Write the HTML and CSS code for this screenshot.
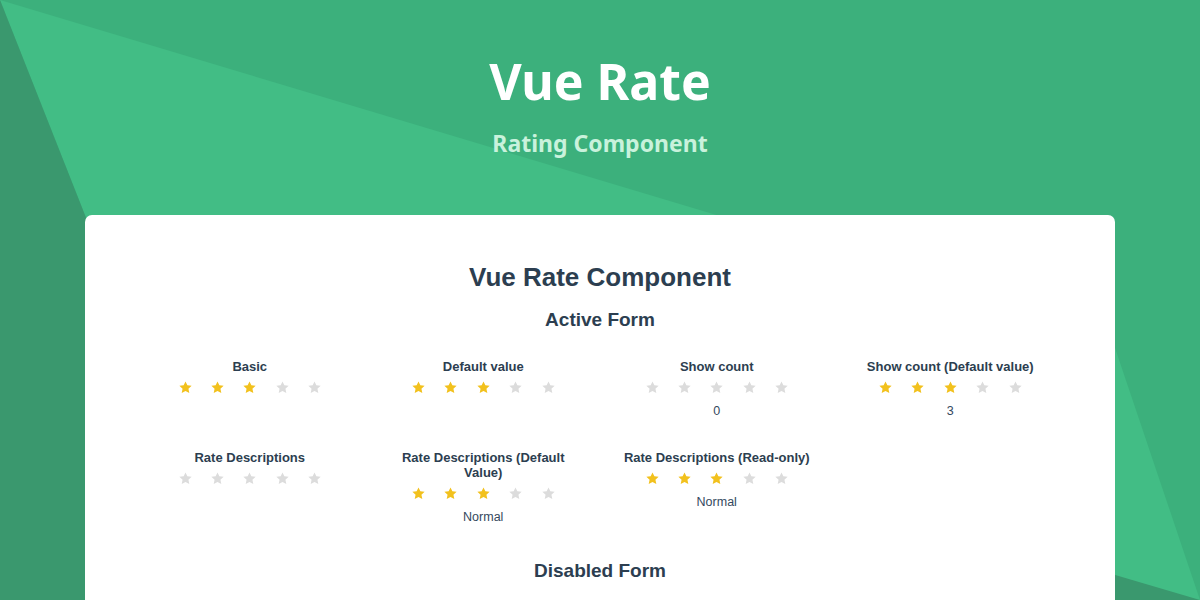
FILE: index.html
```html
<!DOCTYPE html>
<html lang="en">
<head>
<meta charset="utf-8">
<title>Vue Rate</title>
<link rel="stylesheet" href="styles.css">
</head>
<body>
<svg class="bg" viewBox="0 0 1200 600" preserveAspectRatio="none" aria-hidden="true">
  <polygon class="bg-light" points="0,0 1110,333 1200,600 237,600"/>
  <polygon class="bg-dark" points="0,0 237,600 0,600"/>
  <polygon class="bg-dark" points="1000,541 1200,600 1000,600"/>
</svg>
<div class="page">
  <header class="hero">
    <h1 class="hero-title">Vue Rate</h1>
    <p class="hero-sub">Rating Component</p>
  </header>
  <main class="card">
    <h2 class="card-title">Vue Rate Component</h2>
    <h3 class="section-title">Active Form</h3>
    <div class="grid">
      <div class="item">
        <div class="label">Basic</div>
        <div class="stars"><svg class="star on" viewBox="0 0 24 24"><use href="#s"/></svg><svg class="star on" viewBox="0 0 24 24"><use href="#s"/></svg><svg class="star on" viewBox="0 0 24 24"><use href="#s"/></svg><svg class="star" viewBox="0 0 24 24"><use href="#s"/></svg><svg class="star" viewBox="0 0 24 24"><use href="#s"/></svg></div>
      </div>
      <div class="item">
        <div class="label">Default value</div>
        <div class="stars"><svg class="star on" viewBox="0 0 24 24"><use href="#s"/></svg><svg class="star on" viewBox="0 0 24 24"><use href="#s"/></svg><svg class="star on" viewBox="0 0 24 24"><use href="#s"/></svg><svg class="star" viewBox="0 0 24 24"><use href="#s"/></svg><svg class="star" viewBox="0 0 24 24"><use href="#s"/></svg></div>
      </div>
      <div class="item">
        <div class="label">Show count</div>
        <div class="stars"><svg class="star" viewBox="0 0 24 24"><use href="#s"/></svg><svg class="star" viewBox="0 0 24 24"><use href="#s"/></svg><svg class="star" viewBox="0 0 24 24"><use href="#s"/></svg><svg class="star" viewBox="0 0 24 24"><use href="#s"/></svg><svg class="star" viewBox="0 0 24 24"><use href="#s"/></svg></div>
        <div class="info">0</div>
      </div>
      <div class="item">
        <div class="label">Show count (Default value)</div>
        <div class="stars"><svg class="star on" viewBox="0 0 24 24"><use href="#s"/></svg><svg class="star on" viewBox="0 0 24 24"><use href="#s"/></svg><svg class="star on" viewBox="0 0 24 24"><use href="#s"/></svg><svg class="star" viewBox="0 0 24 24"><use href="#s"/></svg><svg class="star" viewBox="0 0 24 24"><use href="#s"/></svg></div>
        <div class="info">3</div>
      </div>
      <div class="item">
        <div class="label">Rate Descriptions</div>
        <div class="stars"><svg class="star" viewBox="0 0 24 24"><use href="#s"/></svg><svg class="star" viewBox="0 0 24 24"><use href="#s"/></svg><svg class="star" viewBox="0 0 24 24"><use href="#s"/></svg><svg class="star" viewBox="0 0 24 24"><use href="#s"/></svg><svg class="star" viewBox="0 0 24 24"><use href="#s"/></svg></div>
      </div>
      <div class="item">
        <div class="label">Rate Descriptions (Default Value)</div>
        <div class="stars"><svg class="star on" viewBox="0 0 24 24"><use href="#s"/></svg><svg class="star on" viewBox="0 0 24 24"><use href="#s"/></svg><svg class="star on" viewBox="0 0 24 24"><use href="#s"/></svg><svg class="star" viewBox="0 0 24 24"><use href="#s"/></svg><svg class="star" viewBox="0 0 24 24"><use href="#s"/></svg></div>
        <div class="info">Normal</div>
      </div>
      <div class="item">
        <div class="label">Rate Descriptions (Read-only)</div>
        <div class="stars"><svg class="star on" viewBox="0 0 24 24"><use href="#s"/></svg><svg class="star on" viewBox="0 0 24 24"><use href="#s"/></svg><svg class="star on" viewBox="0 0 24 24"><use href="#s"/></svg><svg class="star" viewBox="0 0 24 24"><use href="#s"/></svg><svg class="star" viewBox="0 0 24 24"><use href="#s"/></svg></div>
        <div class="info">Normal</div>
      </div>
    </div>
    <h3 class="section-title disabled-title">Disabled Form</h3>
  </main>
</div>
<svg class="defs" aria-hidden="true"><defs><path id="s" d="M12 2.2l2.95 6.3 6.85.8-5.1 4.7 1.4 6.8L12 17.4l-6.1 3.4 1.4-6.8-5.1-4.7 6.85-.8z"/></defs></svg>
</body>
</html>
```
FILE: styles.css
```css
html, body {
  margin: 0;
  padding: 0;
}
body {
  position: relative;
  width: 1200px;
  height: 600px;
  overflow: hidden;
  background: #3cb07c;
  font-family: "Liberation Sans", Arial, sans-serif;
  color: #2c3e50;
}
.bg {
  position: absolute;
  left: 0;
  top: 0;
  width: 1200px;
  height: 600px;
  z-index: 0;
}
.bg-light { fill: #42bd85; }
.bg-dark { fill: #3a986e; }
.defs {
  position: absolute;
  width: 0;
  height: 0;
}
.page {
  position: relative;
  z-index: 1;
  display: flex;
  flex-direction: column;
  align-items: center;
}
.hero {
  text-align: center;
  padding-top: 49px;
  height: 215px;
  box-sizing: border-box;
  flex-shrink: 0;
}
.hero-title {
  margin: 0;
  font-family: "Noto Sans", "Open Sans", sans-serif;
  font-weight: 700;
  font-size: 50px;
  line-height: 64px;
  color: #ffffff;
}
.hero-sub {
  margin: 15px 0 0;
  font-family: "Noto Sans", "Open Sans", sans-serif;
  font-weight: 700;
  font-size: 23px;
  line-height: 30px;
  color: #c9f2dc;
}
.card {
  width: 1030px;
  box-sizing: border-box;
  background: #ffffff;
  border-radius: 7px 7px 0 0;
  padding: 48px 48px 18px;
  flex-shrink: 0;
}
.card-title {
  margin: 0;
  text-align: center;
  font-size: 26px;
  line-height: 28px;
  font-weight: 700;
}
.section-title {
  margin: 18px 0 0;
  text-align: center;
  font-size: 19px;
  line-height: 22px;
  font-weight: 700;
}
.disabled-title {
  margin-top: 35px;
}
.grid {
  margin-top: 28px;
  display: grid;
  grid-template-columns: repeat(4, 1fr);
  row-gap: 31px;
}
.item {
  display: flex;
  flex-direction: column;
  align-items: center;
  text-align: center;
}
.label {
  max-width: 190px;
  font-size: 13px;
  line-height: 15px;
  font-weight: 700;
  margin-bottom: 4px;
}
.stars {
  display: flex;
  height: 18px;
  align-items: center;
}
.star {
  width: 15px;
  height: 15px;
  margin: 0 8.7px;
  fill: #dcdcdc;
}
.star.on {
  fill: #f2c11d;
}
.info {
  margin-top: 8px;
  font-size: 12.5px;
  line-height: 15px;
  color: #34495e;
}
```
